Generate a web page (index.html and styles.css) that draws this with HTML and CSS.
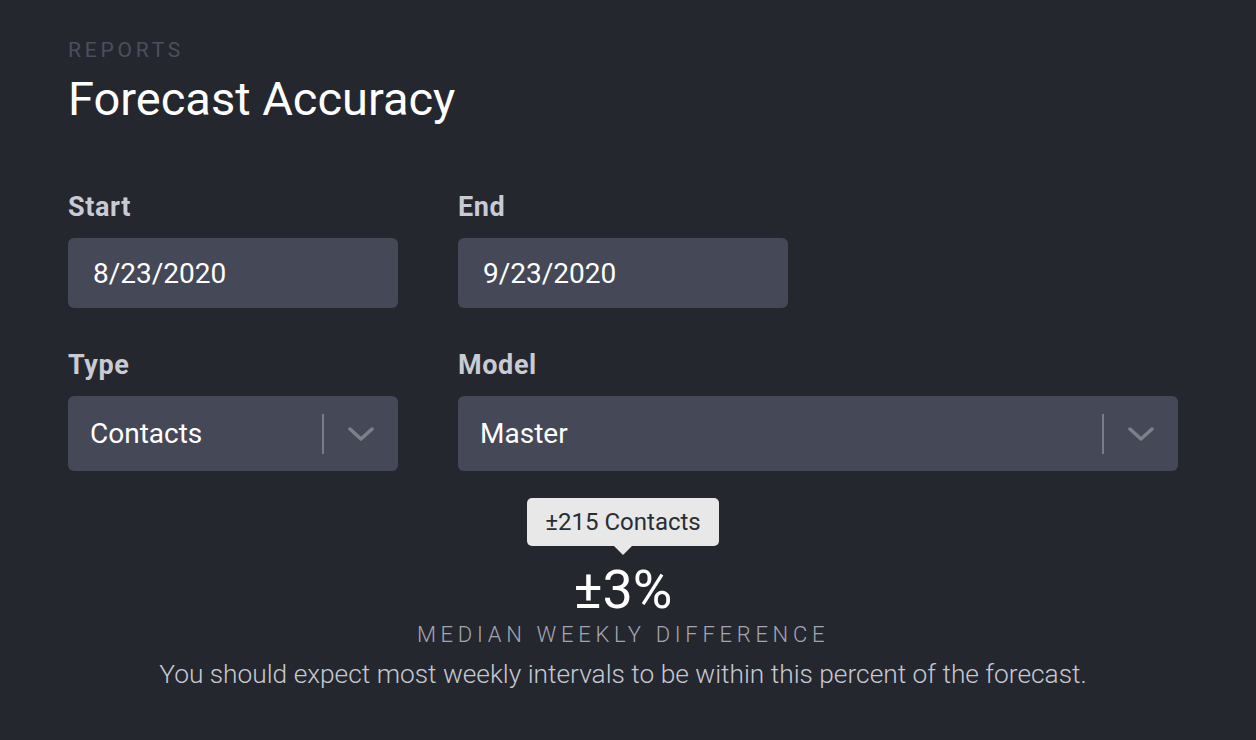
FILE: index.html
```html
<!DOCTYPE html>
<html lang="en">

<head>
  <meta charset="UTF-8">
  <meta name="viewport" content="width=device-width, initial-scale=1.0">
  <title>Forecast Accuracy</title>
  <link rel="stylesheet" href="styles.css">
</head>

<body>
  <main class="page">
    <header class="page-head">
      <p class="eyebrow">Reports</p>
      <h1>Forecast Accuracy</h1>
    </header>

    <!-- Date range -->
    <section class="form-row">
      <div class="field field-small">
        <label class="field-label">Start</label>
        <div class="input">8/23/2020</div>
      </div>
      <div class="field field-small">
        <label class="field-label">End</label>
        <div class="input">9/23/2020</div>
      </div>
    </section>

    <!-- Type / model selects -->
    <section class="form-row">
      <div class="field field-small">
        <label class="field-label">Type</label>
        <div class="select">
          <span class="select-value">Contacts</span>
          <span class="select-sep"></span>
          <svg class="chevron" width="26" height="14" viewBox="0 0 26 14">
            <path d="M2 2 L13 12 L24 2" fill="none" stroke="#7d808a" stroke-width="3.5" stroke-linecap="round" stroke-linejoin="round"/>
          </svg>
        </div>
      </div>
      <div class="field field-wide">
        <label class="field-label">Model</label>
        <div class="select">
          <span class="select-value">Master</span>
          <span class="select-sep"></span>
          <svg class="chevron" width="26" height="14" viewBox="0 0 26 14">
            <path d="M2 2 L13 12 L24 2" fill="none" stroke="#7d808a" stroke-width="3.5" stroke-linecap="round" stroke-linejoin="round"/>
          </svg>
        </div>
      </div>
    </section>

    <section class="result">
      <div class="tooltip">±215 Contacts</div>
      <div class="result-value">±3%</div>
      <div class="result-label">Median Weekly Difference</div>
      <p class="result-note">You should expect most weekly intervals to be within this percent of the forecast.</p>
    </section>
  </main>
</body>

</html>
```

FILE: styles.css
```css
/* Basic styling */
body {
  margin: 0;
  font-family: Roboto, "Liberation Sans", sans-serif;
  background-color: #25272f;
  color: #fff;
  height: 100vh;
}

.page {
  width: 1110px;
  padding: 38px 0 0 68px;
}

.eyebrow {
  margin: 0;
  font-size: 21px;
  line-height: 24px;
  letter-spacing: 3.8px;
  text-transform: uppercase;
  color: #4b4f5c;
}

h1 {
  margin: 9px 0 0;
  font-size: 47px;
  line-height: 56px;
  font-weight: 400;
  color: #fff;
}

.form-row {
  display: flex;
  gap: 60px;
  margin-top: 64px;
}

.form-row + .form-row {
  margin-top: 41px;
}

.field-small {
  width: 330px;
}

.field-wide {
  flex: 1;
}

.field-label {
  display: block;
  font-size: 27px;
  line-height: 32px;
  font-weight: 700;
  letter-spacing: 0.6px;
  color: #c8cbd3;
  margin-bottom: 15px;
}

.input,
.select {
  display: flex;
  align-items: center;
  background-color: #454856;
  border-radius: 6px;
  font-size: 28px;
  color: #fff;
}

.input {
  height: 70px;
  padding: 0 25px;
}

.select {
  height: 75px;
  padding: 0 24px 0 22px;
}

.select-value {
  flex: 1;
}

.select-sep {
  width: 2px;
  height: 40px;
  background-color: #7a7d87;
  margin-right: 24px;
}

.chevron {
  display: block;
}

/* Result block */
.result {
  display: flex;
  flex-direction: column;
  align-items: center;
  margin-top: 27px;
}

.tooltip {
  position: relative;
  height: 48px;
  padding: 0 18px;
  display: flex;
  align-items: center;
  background-color: #e8e8e9;
  border-radius: 5px;
  font-size: 24px;
  color: #2b2d35;
}

.tooltip::after {
  content: "";
  position: absolute;
  left: 50%;
  bottom: -9px;
  margin-left: -9px;
  border-left: 9px solid transparent;
  border-right: 9px solid transparent;
  border-top: 9px solid #e8e8e9;
}

.result-value {
  margin-top: 14px;
  font-size: 54px;
  line-height: 60px;
  color: #fff;
}

.result-label {
  margin-top: 1px;
  font-size: 22px;
  line-height: 28px;
  font-weight: 300;
  letter-spacing: 4.7px;
  text-transform: uppercase;
  color: #a3a6b0;
}

.result-note {
  margin: 9px 0 0;
  font-size: 26.3px;
  line-height: 32px;
  font-weight: 300;
  color: #c6c9d1;
}
```
